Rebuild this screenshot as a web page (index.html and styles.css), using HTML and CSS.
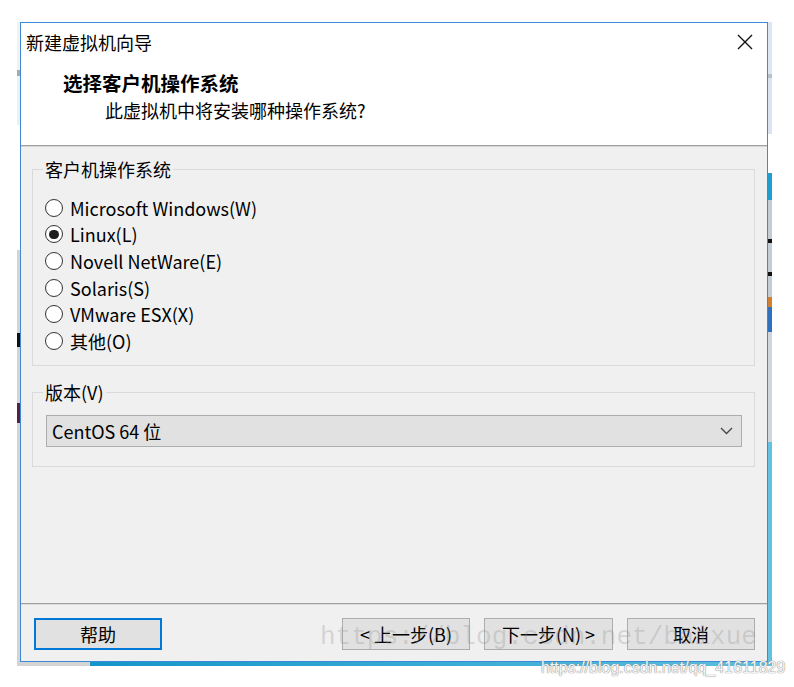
FILE: index.html
```html
<!DOCTYPE html>
<html lang="zh-CN">
<head>
<meta charset="utf-8">
<title>新建虚拟机向导</title>
<link rel="stylesheet" href="styles.css">
</head>
<body>
  <div class="desk desk-left"></div>
  <div class="desk desk-right"></div>
  <div class="desk desk-bottom"></div>

  <div class="window">
    <div class="titlebar">
      <span class="title">新建虚拟机向导</span>
      <svg class="close" width="16" height="16" viewBox="0 0 16 16" aria-hidden="true">
        <path d="M1 1 L15 15 M15 1 L1 15" stroke="#111" stroke-width="1.4" fill="none"/>
      </svg>
    </div>

    <div class="header">
      <div class="h-title">选择客户机操作系统</div>
      <div class="h-sub">此虚拟机中将安装哪种操作系统?</div>
    </div>

    <div class="content">
      <fieldset class="group group-os">
        <legend>客户机操作系统</legend>
        <div class="radio"><span class="circle"></span><span>Microsoft Windows(W)</span></div>
        <div class="radio"><span class="circle checked"></span><span>Linux(L)</span></div>
        <div class="radio"><span class="circle"></span><span>Novell NetWare(E)</span></div>
        <div class="radio"><span class="circle"></span><span>Solaris(S)</span></div>
        <div class="radio"><span class="circle"></span><span>VMware ESX(X)</span></div>
        <div class="radio"><span class="circle"></span><span>其他(O)</span></div>
      </fieldset>

      <fieldset class="group group-ver">
        <legend>版本(V)</legend>
        <div class="select">
          <span>CentOS 64 位</span>
          <svg class="chev" width="13" height="8" viewBox="0 0 13 8" aria-hidden="true">
            <path d="M1 1 L6.5 6.5 L12 1" stroke="#444" stroke-width="1.3" fill="none"/>
          </svg>
        </div>
      </fieldset>
    </div>

    <div class="footer">
      <button class="btn btn-default">帮助</button>
      <div class="spacer"></div>
      <button class="btn">&lt; 上一步(B)</button>
      <button class="btn btn-next">下一步(N) &gt;</button>
      <button class="btn">取消</button>
    </div>
  </div>

  <div class="wm-big">https://blog.csdn.net/baixue</div>
  <div class="wm-small">https://blog.csdn.net/qq_41611829</div>
</body>
</html>
```
FILE: styles.css
```css
html, body {
  margin: 0;
  padding: 0;
}

body {
  width: 794px;
  height: 687px;
  position: relative;
  overflow: hidden;
  background: #ffffff;
  font-family: "Noto Sans CJK SC", "Noto Sans", sans-serif;
  color: #000;
}

/* desktop visible behind the dialog */
.desk {
  position: absolute;
}

.desk-left {
  left: 17px;
  top: 22px;
  width: 3px;
  height: 644px;
  background: linear-gradient(to bottom,
    #f2f2f2 0 48px, #a9a9a9 48px 54px, #eef0f8 54px 103px,
    #ffffff 103px 228px, #d4d4d4 228px 311px, #111111 311px 325px,
    #d4d4d4 325px 381px, #5a2040 381px 401px, #d4d4d4 401px 644px);
}

.desk-right {
  left: 768px;
  top: 22px;
  width: 4px;
  height: 644px;
  background: linear-gradient(to bottom,
    #dde6f3 0 52px, #b8c0cc 52px 56px, #dbe3f1 56px 112px,
    #ffffff 112px 151px, #1f9fd0 151px 178px, #c4ccd4 178px 217px,
    #111111 217px 221px, #c4ccd4 221px 250px, #111111 250px 254px,
    #c4ccd4 254px 275px, #d08030 275px 285px, #3070c0 285px 310px,
    #d0d6dc 310px 420px, #63c2e2 420px 644px);
}

.desk-bottom {
  left: 17px;
  top: 662px;
  width: 755px;
  height: 4px;
  background: linear-gradient(to right, #d4d4d4 0 73px, #1596c8 73px, #5cc0e0 100%);
}

/* dialog window */
.window {
  position: absolute;
  left: 20px;
  top: 22px;
  width: 748px;
  height: 640px;
  box-sizing: border-box;
  border: 1px solid #3d8ad8;
  background: #f0f0f0;
  display: flex;
  flex-direction: column;
}

.titlebar {
  height: 37px;
  flex: none;
  background: #fff;
  display: flex;
  align-items: center;
  padding-left: 5px;
  font-size: 18px;
}

.close {
  margin-left: auto;
  margin-right: 14px;
}

.header {
  height: 85px;
  flex: none;
  background: #fff;
  border-bottom: 1px solid #a0a0a0;
}

.h-title {
  padding: 10px 0 0 42px;
  font-size: 19.5px;
  font-weight: bold;
  line-height: 26px;
}

.h-sub {
  margin-top: 1px;
  padding-left: 84px;
  font-size: 18px;
  line-height: 26px;
}

.content {
  flex: 1;
  border-top: 1px solid #d6d6d6;
  padding: 10px 12px 0 11px;
}

.group {
  margin: 0;
  border: 1px solid #dadada;
  min-width: 0;
}

.group legend {
  padding: 0 2px;
  font-size: 18px;
  line-height: 24px;
}

.group-os {
  padding: 13.5px 12px 11px 10px;
}

.group-ver {
  margin-top: 14px;
  padding: 11px 12px 19px 10px;
}

.radio {
  height: 26.6px;
  display: flex;
  align-items: center;
  font-size: 18px;
  margin-left: 2px;
}

.circle {
  width: 18px;
  height: 18px;
  box-sizing: border-box;
  border: 1.6px solid #333;
  border-radius: 50%;
  background: #fff;
  margin-right: 7px;
  display: flex;
  align-items: center;
  justify-content: center;
  flex: none;
}

.circle.checked::after {
  content: "";
  width: 9.5px;
  height: 9.5px;
  border-radius: 50%;
  background: #1e1e1e;
}

.select {
  margin-left: 3px;
  height: 32px;
  box-sizing: border-box;
  border: 1px solid #adadad;
  background: #e1e1e1;
  display: flex;
  align-items: center;
  padding: 0 8px 0 5px;
  font-size: 18px;
}

.chev {
  margin-left: auto;
}

.footer {
  flex: none;
  border-top: 1px solid #a0a0a0;
  box-shadow: inset 0 1px 0 #dcdcdc;
  padding: 14px 12px 11px 13px;
  display: flex;
  gap: 14px;
}

.spacer {
  flex: 1;
}

.btn {
  width: 128px;
  height: 32px;
  box-sizing: border-box;
  border: 1px solid #adadad;
  background: #e1e1e1;
  font-family: inherit;
  font-size: 18px;
  color: #000;
  padding: 0;
  margin: 0;
}

.btn-next {
  width: 129px;
}

.btn-default {
  border: 2px solid #0078d7;
}

/* watermarks */
.wm-big {
  position: absolute;
  left: 320px;
  top: 624px;
  font-family: "Liberation Mono", monospace;
  font-size: 26px;
  line-height: 26px;
  color: rgba(140, 140, 140, 0.28);
  white-space: nowrap;
  pointer-events: none;
}

.wm-small {
  position: absolute;
  left: 541px;
  top: 658px;
  font-family: "Liberation Sans", sans-serif;
  font-size: 16px;
  line-height: 20px;
  color: rgba(255, 255, 255, 0.92);
  text-shadow: 0 0 1px #8a8a8a, 0 0 1px #8a8a8a;
  white-space: nowrap;
  pointer-events: none;
}
```
